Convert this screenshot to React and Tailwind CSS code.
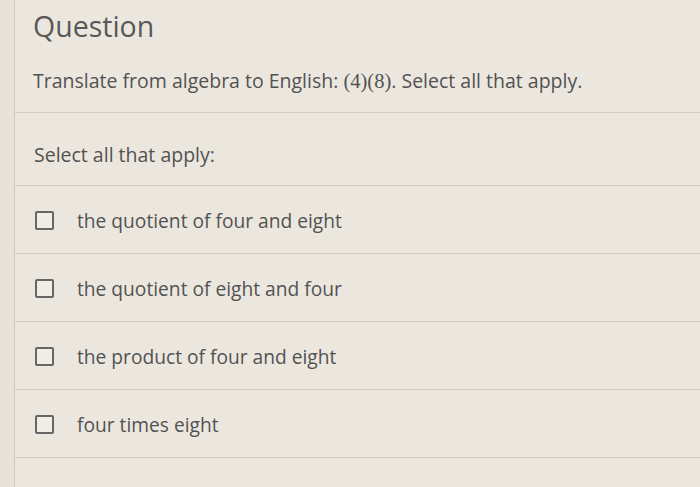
const options = [
  'the quotient of four and eight',
  'the quotient of eight and four',
  'the product of four and eight',
  'four times eight',
];

export default function App() {
  return (
    <div
      className="flex h-[487px] w-[700px] overflow-hidden bg-[#ece7de] text-[#525252]"
      style={{ fontFamily: '"Open Sans", "Noto Sans", sans-serif' }}
    >
      {/* left gutter */}
      <div className="w-[15px] shrink-0 border-r border-[#cfc9bf] bg-[#e7e2d9]" />

      <div className="flex-1">
        {/* question header */}
        <div className="h-[113px] border-b border-[#d3cdc3] pl-[18px] pt-[9px]">
          <h1 className="text-[28.5px] leading-[34px] text-[#585858]">Question</h1>
          <p className="mt-[25px] text-[19.5px] leading-[26px]">
            Translate from algebra to English:{' '}
            <span className="text-[20.5px]" style={{ fontFamily: '"Liberation Serif", serif' }}>
              (4)(8)
            </span>
            . Select all that apply.
          </p>
        </div>

        <div className="h-[73px] border-b border-[#d3cdc3] pl-[19px] pt-[29px] text-[19.5px] leading-[26px]">
          Select all that apply:
        </div>

        {options.map((label) => (
          <label
            key={label}
            className="flex h-[68px] items-center gap-[23px] border-b border-[#d3cdc3] pl-[20px] pt-[2px] text-[19.2px] leading-[26px]"
          >
            <span className="h-[19px] w-[19px] shrink-0 rounded-[2px] border-2 border-[#666666] bg-[#f1ede6]" />
            <span>{label}</span>
          </label>
        ))}
      </div>
    </div>
  );
}
